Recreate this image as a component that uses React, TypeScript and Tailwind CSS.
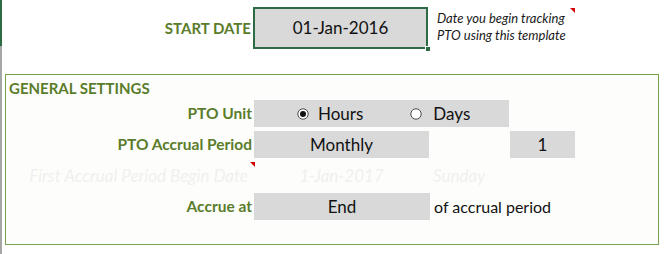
import React from 'react';

const FONT = { fontFamily: 'Lato, "Liberation Sans", sans-serif' };

function Radio({ checked }: { checked: boolean }) {
  return (
    <svg width="12" height="12" viewBox="0 0 12 12" className="shrink-0">
      <circle cx="6" cy="6" r="5.2" fill="#ffffff" stroke="#4a4a4a" strokeWidth="1" />
      {checked && <circle cx="6" cy="6" r="3" fill="#111111" />}
    </svg>
  );
}

function Corner() {
  return (
    <svg width="5" height="5" viewBox="0 0 5 5" className="shrink-0">
      <polygon points="0,0 5,0 5,5" fill="#d40000" />
    </svg>
  );
}

function Row({ label, children, faint }: { label: string; children: React.ReactNode; faint?: boolean }) {
  return (
    <div className="flex h-[27px] mb-[4px] items-center">
      <div
        className={
          'w-[248px] text-right shrink-0 ' +
          (faint ? 'italic text-[17px] pr-[6px] text-[#f0f0f0]' : 'font-bold text-[15.5px] pr-[2px] text-[#5a7c2b]')
        }
      >
        {label}
      </div>
      {children}
    </div>
  );
}

export default function App() {
  return (
    <div className="flex w-[666px] h-[254px] bg-white text-[#111]" style={FONT}>
      <div className="flex flex-col w-[2px]">
        <div className="h-[46px] bg-[#2d6b45]" />
        <div className="flex-1 bg-[#a6a6a6]" />
      </div>
      <div className="flex-1 flex flex-col">
        {/* start date */}
        <div className="flex items-start pt-[7px] h-[74px]">
          <div className="w-[251px] text-right pr-[2px] pt-[10px] text-[15px] font-bold text-[#5a7c2b]">
            START DATE
          </div>
          <div className="relative w-[175px] h-[42px] border-2 border-[#2d6b45] bg-[#d9d9d9] flex items-center justify-center text-[17px]">
            01-Jan-2016
            <div className="absolute right-[-5px] bottom-[-5px] w-[6px] h-[6px] bg-[#2d6b45] border border-white" />
          </div>
          <div className="pl-[9px] pt-[3px] text-[13px] italic leading-[17px] text-[#1a1a1a]">
            <div>Date you begin tracking</div>
            <div>PTO using this template</div>
          </div>
          <div className="pl-[4px] pt-[1px]">
            <Corner />
          </div>
        </div>

        {/* general settings */}
        <div className="ml-[3px] w-[654px] h-[171px] border border-[#78a24e] bg-[#fdfefb]">
          <div className="pl-[3px] pt-[2px] h-[25px] text-[15px] font-bold text-[#5a7c2b] leading-[22px]">
            GENERAL SETTINGS
          </div>
          <Row label="PTO Unit">
            <div className="w-[255px] h-[27px] bg-[#d9d9d9] flex items-center text-[17px]">
              <div className="ml-[43px] flex items-center gap-[9px]">
                <Radio checked />
                <span>Hours</span>
              </div>
              <div className="ml-[47px] flex items-center gap-[11px]">
                <Radio checked={false} />
                <span>Days</span>
              </div>
            </div>
          </Row>
          <Row label="PTO Accrual Period">
            <div className="w-[175px] h-[27px] bg-[#d9d9d9] flex items-center justify-center text-[17px]">
              Monthly
            </div>
            <div className="ml-[81px] w-[65px] h-[27px] bg-[#d9d9d9] flex items-center justify-center text-[17px]">
              1
            </div>
          </Row>
          <div className="relative">
            <div className="absolute left-[244px] top-[0px]">
              <Corner />
            </div>
            <Row label="First Accrual Period Begin Date" faint>
              <div className="w-[175px] flex items-center justify-center text-[17px] italic text-[#f0f0f0]">
                1-Jan-2017
              </div>
              <div className="pl-[4px] text-[17px] italic text-[#f0f0f0]">Sunday</div>
            </Row>
          </div>
          <Row label="Accrue at">
            <div className="w-[176px] h-[27px] bg-[#d9d9d9] flex items-center justify-center text-[17px]">
              End
            </div>
            <div className="pl-[4px] text-[16px]">of accrual period</div>
          </Row>
        </div>
      </div>
    </div>
  );
}
